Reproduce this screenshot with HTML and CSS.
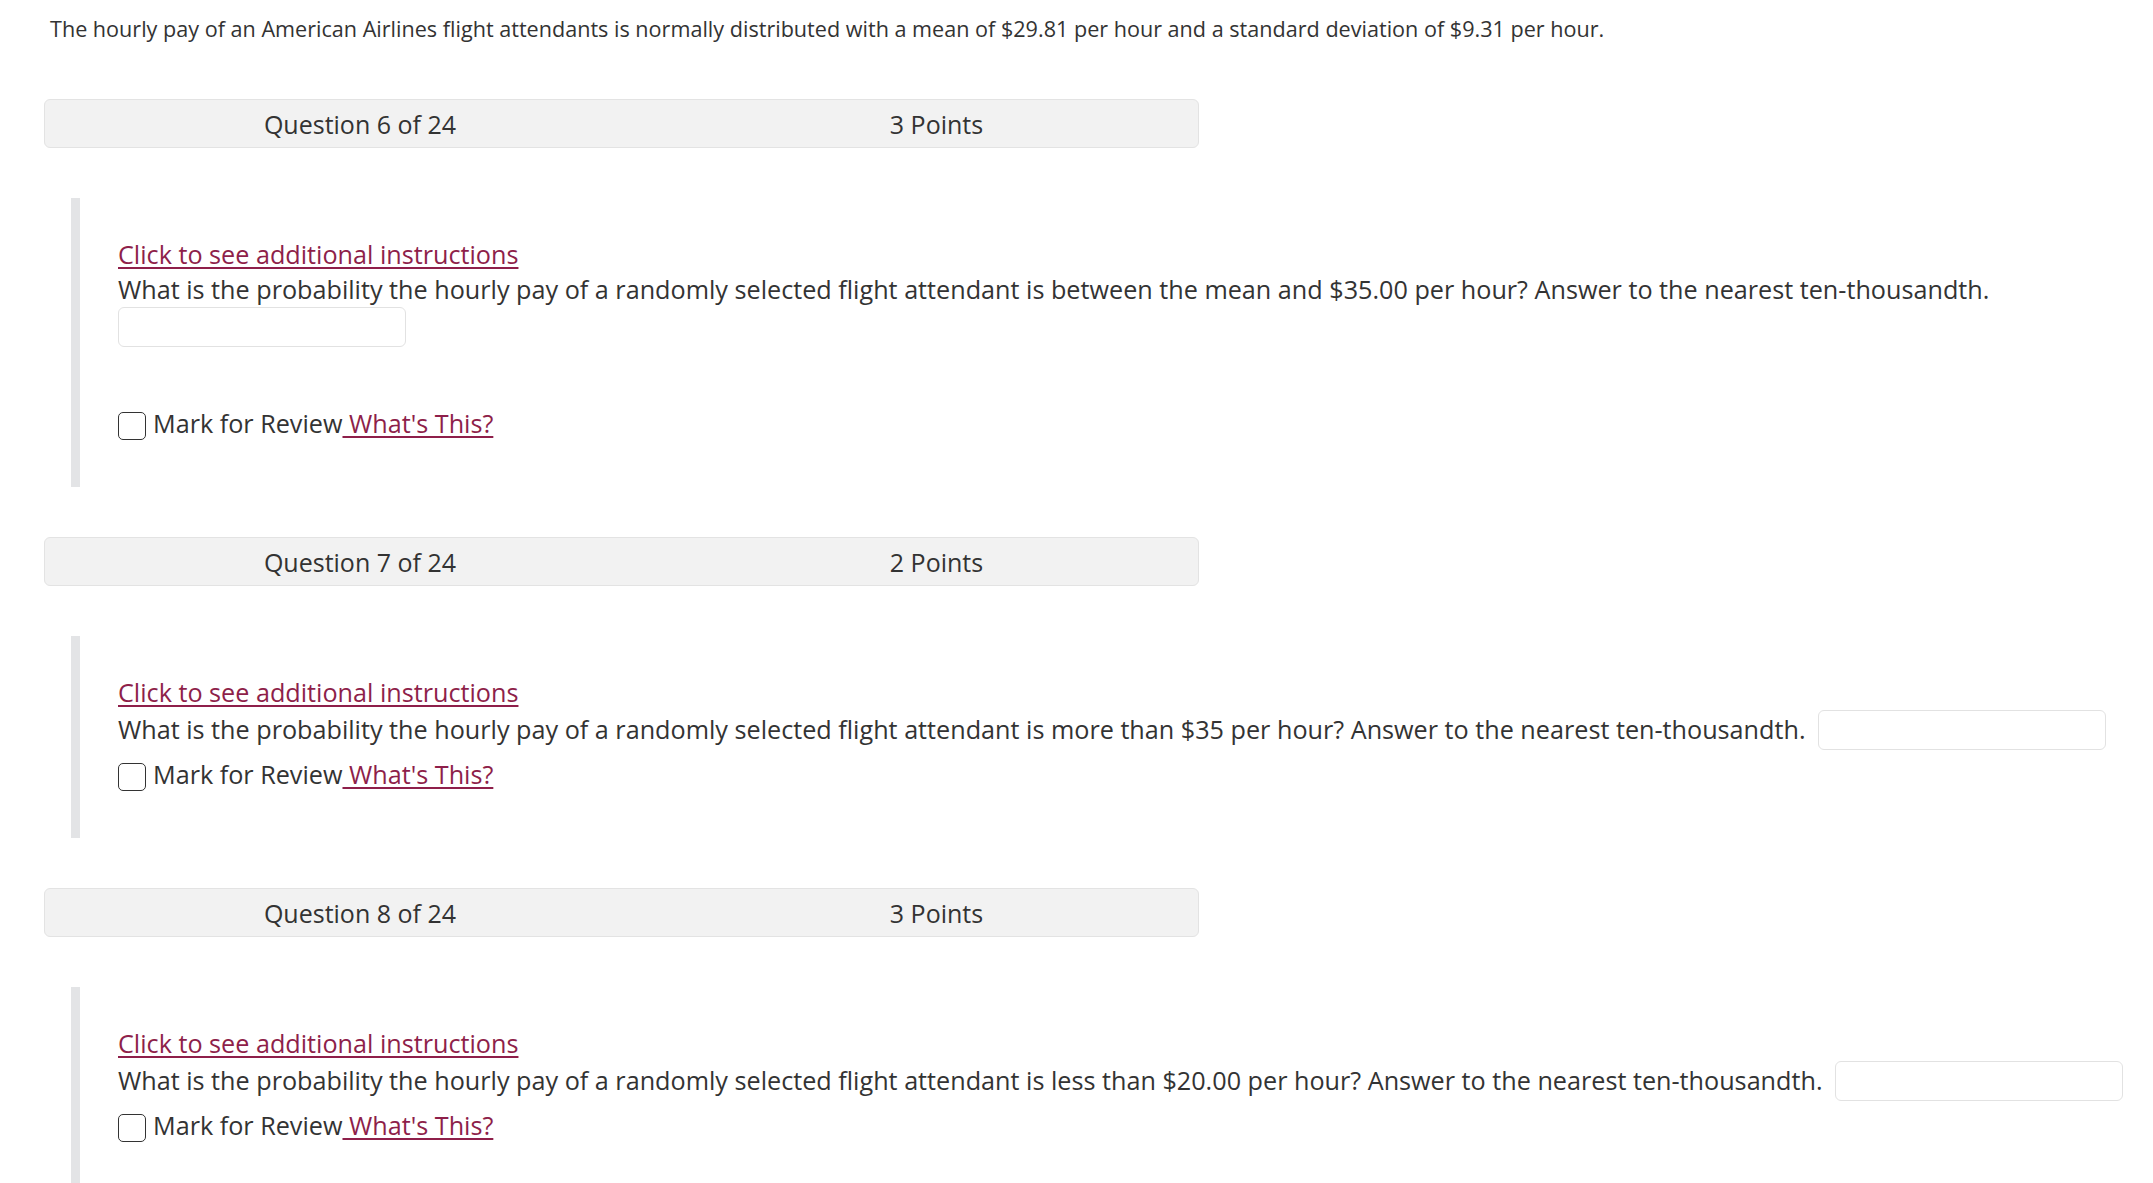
FILE: index.html
```html
<!DOCTYPE html>
<html>
<head>
<meta charset="utf-8">
<link rel="stylesheet" href="styles.css">
</head>
<body>
<p class="intro">The hourly pay of an American Airlines flight attendants is normally distributed with a mean of $29.81 per hour and a standard deviation of $9.31 per hour.</p>

<div class="qhead"><div class="qnum">Question 6 of 24</div><div class="qpts">3 Points</div></div>
<div class="qbody">
  <div class="line"><a href="#" class="link">Click to see additional instructions</a></div>
  <div class="line">What is the probability the hourly pay of a randomly selected flight attendant is between the mean and $35.00 per hour? Answer to the nearest ten-thousandth. <span class="answer wrapped"></span></div>
  <div class="line review spaced"><span class="box"></span>Mark for Review<a href="#" class="link"> What's This?</a></div>
</div>

<div class="qhead"><div class="qnum">Question 7 of 24</div><div class="qpts">2 Points</div></div>
<div class="qbody">
  <div class="line"><a href="#" class="link">Click to see additional instructions</a></div>
  <div class="line">What is the probability the hourly pay of a randomly selected flight attendant is more than $35 per hour? Answer to the nearest ten-thousandth. <span class="answer"></span></div>
  <div class="line review"><span class="box"></span>Mark for Review<a href="#" class="link"> What's This?</a></div>
</div>

<div class="qhead"><div class="qnum">Question 8 of 24</div><div class="qpts">3 Points</div></div>
<div class="qbody">
  <div class="line"><a href="#" class="link">Click to see additional instructions</a></div>
  <div class="line">What is the probability the hourly pay of a randomly selected flight attendant is less than $20.00 per hour? Answer to the nearest ten-thousandth. <span class="answer"></span></div>
  <div class="line review"><span class="box"></span>Mark for Review<a href="#" class="link"> What's This?</a></div>
</div>
</body>
</html>
```

FILE: styles.css
```css
html, body {
  margin: 0;
  padding: 0;
  background: #ffffff;
}
body {
  font-family: "Open Sans", "Liberation Sans", sans-serif;
  color: #333333;
  padding: 0 0 0 44px;
  overflow: hidden;
  height: 1183px;
}
.intro {
  margin: 0;
  padding: 14px 0 0 6px;
  font-size: 21.6px;
  line-height: 30px;
}
.qhead {
  margin-top: 55px;
  width: 1153px;
  height: 47px;
  background: #f2f2f2;
  border: 1px solid #e3e3e3;
  border-radius: 6px;
  display: grid;
  grid-template-columns: 630px 1fr;
  align-items: center;
  font-size: 25px;
}
.qhead + .qbody { margin-top: 50px; }
.qbody + .qhead { margin-top: 50px; }
.qnum, .qpts {
  text-align: center;
}
.qbody {
  margin-left: 27px;
  border-left: 9px solid #e3e4e6;
  padding: 39px 0 46px 38px;
  font-size: 25.2px;
  line-height: 35px;
}
.link {
  color: #8e1f4a;
  text-decoration: underline;
  text-underline-offset: 3px;
  text-decoration-thickness: 2px;
}
.answer {
  display: inline-block;
  vertical-align: -11px;
  width: 286px;
  height: 38px;
  border: 1px solid #e2e2e2;
  border-radius: 6px;
  margin-left: 6px;
  background: #fff;
}
.answer.wrapped { margin-left: 0; }
.review {
  display: flex;
  align-items: center;
  white-space: pre;
  margin-top: 7px;
}
.review.spaced { margin-top: 59px; }
.box {
  display: inline-block;
  width: 26px;
  height: 26px;
  border: 1px solid #333;
  border-radius: 5px;
  margin-right: 7px;
  margin-top: 4px;
  box-sizing: content-box;
}
```
